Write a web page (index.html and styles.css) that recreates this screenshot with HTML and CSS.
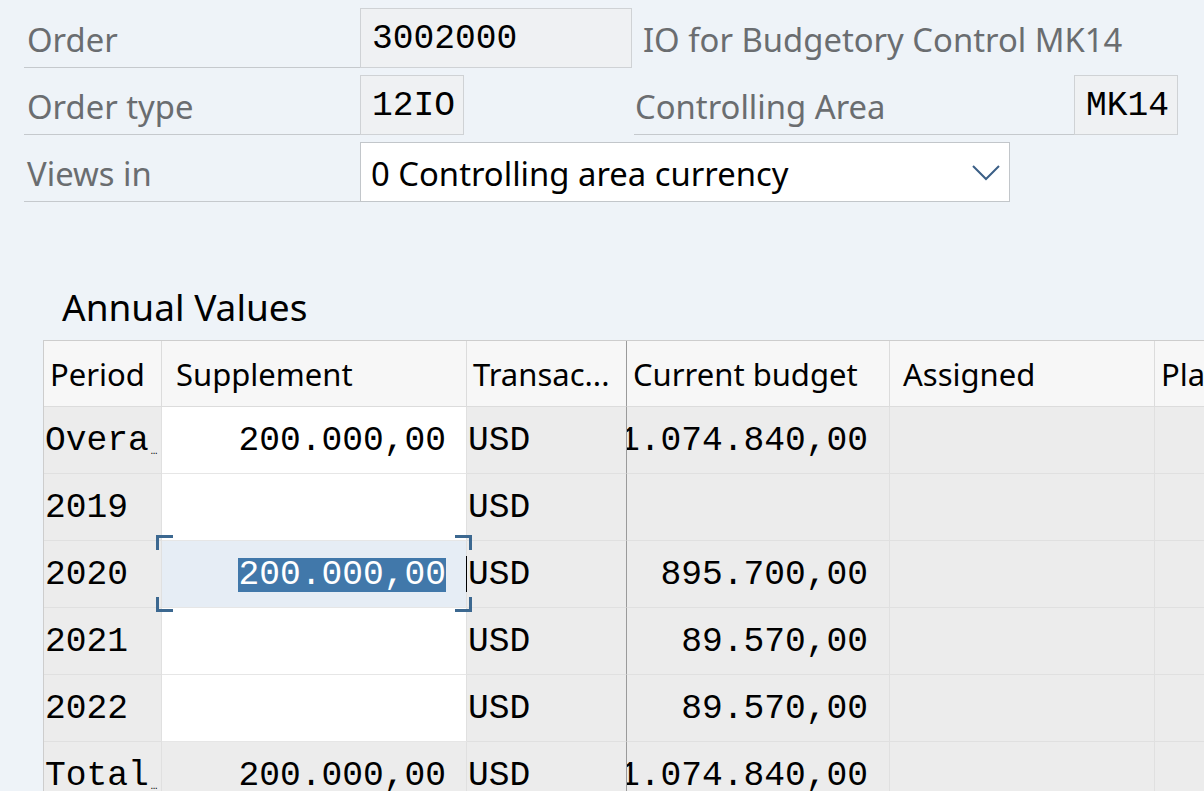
FILE: index.html
```html
<!DOCTYPE html>
<html lang="en">
<head>
<meta charset="utf-8">
<title>Change Budget: Annual Values</title>
<link rel="stylesheet" href="styles.css">
</head>
<body>
<div class="screen">
  <div class="form">
    <div class="row">
      <div class="label">Order</div>
      <div class="field f-order">3002000</div>
      <div class="desc">IO for Budgetory Control MK14</div>
    </div>
    <div class="row">
      <div class="label">Order type</div>
      <div class="field f-short">12IO</div>
      <div class="label label-ca">Controlling Area</div>
      <div class="field f-short">MK14</div>
    </div>
    <div class="row">
      <div class="label">Views in</div>
      <div class="select">
        <span>0 Controlling area currency</span>
        <svg class="chevron" width="30" height="18" viewBox="0 0 30 18" aria-hidden="true">
          <polyline points="2,2 15,15 28,2" fill="none" stroke="#3b5f86" stroke-width="2"/>
        </svg>
      </div>
    </div>
  </div>

  <h2 class="section-title">Annual Values</h2>

  <div class="table">
    <div class="th c-period">Period</div>
    <div class="th c-supp">Supplement</div>
    <div class="th c-curr">Transac...</div>
    <div class="th c-budget">Current budget</div>
    <div class="th c-assigned">Assigned</div>
    <div class="th c-plan">Pla</div>

    <div class="td c-period">Overa<span class="trunc">…</span></div>
    <div class="td c-supp edit num">200.000,00</div>
    <div class="td c-curr">USD</div>
    <div class="td c-budget num"><span>1.074.840,00</span></div>
    <div class="td c-assigned"></div>
    <div class="td c-plan"></div>

    <div class="td c-period">2019</div>
    <div class="td c-supp edit num"></div>
    <div class="td c-curr">USD</div>
    <div class="td c-budget num"></div>
    <div class="td c-assigned"></div>
    <div class="td c-plan"></div>

    <div class="td c-period">2020</div>
    <div class="td c-supp edit num focused">
      <span class="selected-text">200.000,00</span>
      <span class="caret"></span>
      <span class="corner tl"></span><span class="corner tr"></span>
      <span class="corner bl"></span><span class="corner br"></span>
    </div>
    <div class="td c-curr">USD</div>
    <div class="td c-budget num"><span>895.700,00</span></div>
    <div class="td c-assigned"></div>
    <div class="td c-plan"></div>

    <div class="td c-period">2021</div>
    <div class="td c-supp edit num"></div>
    <div class="td c-curr">USD</div>
    <div class="td c-budget num"><span>89.570,00</span></div>
    <div class="td c-assigned"></div>
    <div class="td c-plan"></div>

    <div class="td c-period">2022</div>
    <div class="td c-supp edit num"></div>
    <div class="td c-curr">USD</div>
    <div class="td c-budget num"><span>89.570,00</span></div>
    <div class="td c-assigned"></div>
    <div class="td c-plan"></div>

    <div class="td c-period">Total<span class="trunc">…</span></div>
    <div class="td c-supp num">200.000,00</div>
    <div class="td c-curr">USD</div>
    <div class="td c-budget num"><span>1.074.840,00</span></div>
    <div class="td c-assigned"></div>
    <div class="td c-plan"></div>
  </div>
</div>
</body>
</html>
```

FILE: styles.css
```css
html, body {
  margin: 0;
  height: 100%;
}

body {
  background: #eef3f8;
  overflow: hidden;
  font-family: "Noto Sans", "Open Sans", sans-serif;
  color: #000;
}

.screen {
  padding: 8px 0 0 24px;
}

/* ---- header form ---- */
.form {
  display: flex;
  flex-direction: column;
  gap: 7px;
}

.row {
  display: flex;
  height: 60px;
}

.label {
  box-sizing: border-box;
  width: 336px;
  padding: 3px 0 0 3px;
  border-bottom: 1px solid #c5c9cd;
  color: #6a6d70;
  font-size: 32.8px;
  display: flex;
  align-items: center;
  white-space: nowrap;
}

.label-ca {
  width: 440px;
  margin-left: 170px;
  padding-left: 1px;
}

.field {
  box-sizing: border-box;
  border: 1px solid #cfd2d5;
  background: #eff1f3;
  padding-left: 11px;
  display: flex;
  align-items: center;
  font-family: "Liberation Mono", monospace;
  font-size: 34.6px;
}

.f-order { width: 272px; }
.f-short { width: 104px; }

.desc {
  margin-left: 11px;
  padding-top: 3px;
  color: #6a6d70;
  font-size: 32.8px;
  display: flex;
  align-items: center;
  white-space: nowrap;
}

.select {
  box-sizing: border-box;
  width: 650px;
  background: #fff;
  border: 1px solid #c2c6ca;
  padding: 2px 8px 0 10px;
  display: flex;
  align-items: center;
  justify-content: space-between;
  font-size: 32.8px;
}

.chevron {
  margin-top: 0;
}

/* ---- section title ---- */
.section-title {
  margin: 80px 0 0 38px;
  height: 58px;
  font-size: 37px;
  font-weight: 400;
  line-height: 50px;
}

/* ---- annual values table ---- */
.table {
  margin-left: 19px;
  width: max-content;
  display: grid;
  grid-template-columns: 118px 305px 160px 263px 265px 120px;
  grid-template-rows: 66px repeat(6, 67px);
  border-left: 1px solid #cdcdcd;
  border-top: 1px solid #cdcdcd;
}

.th,
.td {
  box-sizing: border-box;
  border-right: 1px solid #e0e0e0;
  border-bottom: 1px solid #e0e0e0;
  display: flex;
  align-items: center;
  white-space: nowrap;
  overflow: hidden;
}

.th {
  background: #f7f7f7;
  border-right-color: #dcdcdc;
  border-bottom-color: #dcdcdc;
  font-size: 31px;
  padding-left: 6px;
}

.th.c-supp { padding-left: 14px; }
.th.c-assigned { padding-left: 13px; }

.td {
  background: #ececec;
  font-family: "Liberation Mono", monospace;
  font-size: 34.6px;
  padding-left: 1px;
}

.c-curr {
  border-right-color: #9a9a9a !important;
}

.td.edit {
  background: #fff;
  border-bottom-color: #e6e6e6;
}

.td.num {
  justify-content: flex-end;
  padding-right: 20px;
}

.td.c-budget {
  padding-right: 21px;
}

.trunc {
  font-size: 11px;
  align-self: flex-end;
  margin: 0 0 16px 2px;
}

/* focused input cell */
.td.focused {
  position: relative;
  overflow: visible;
  background: #e6edf5;
}

.selected-text {
  background: #4178aa;
  color: #fff;
  line-height: 34px;
  display: inline-block;
  margin-top: 1px;
}

.caret {
  position: absolute;
  right: -1px;
  top: 15px;
  width: 1px;
  height: 36px;
  background: #000;
}

.corner {
  position: absolute;
  width: 14px;
  height: 12px;
  border: 0 solid #3c6890;
}

.corner.tl { left: -6px; top: -6px; border-left-width: 3px; border-top-width: 3px; }
.corner.tr { right: -6px; top: -6px; border-right-width: 3px; border-top-width: 3px; }
.corner.bl { left: -6px; bottom: -5px; border-left-width: 3px; border-bottom-width: 3px; }
.corner.br { right: -6px; bottom: -5px; border-right-width: 3px; border-bottom-width: 3px; }
```
